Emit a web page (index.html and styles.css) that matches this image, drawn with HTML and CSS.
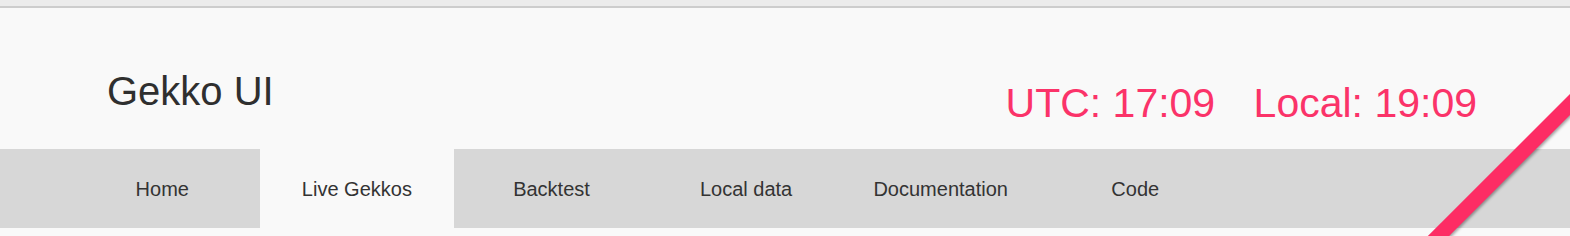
FILE: index.html
```html
<!DOCTYPE html>
<html lang="en">
<head>
    <meta charset="UTF-8">
    <title>Gekko UI</title>
    <link rel="stylesheet" href="styles.css">
</head>
<body>
    <div class="chrome"></div>
    <header class="header">
        <h1 class="title">Gekko UI</h1>
        <div class="clock">
            <span>UTC: 17:09</span>
            <span class="local">Local: 19:09</span>
        </div>
    </header>
    <nav class="nav">
        <a class="nav-item">Home</a>
        <a class="nav-item active">Live Gekkos</a>
        <a class="nav-item">Backtest</a>
        <a class="nav-item">Local data</a>
        <a class="nav-item">Documentation</a>
        <a class="nav-item">Code</a>
    </nav>
    <div class="ribbon-wrap">
        <div class="ribbon"></div>
    </div>
</body>
</html>
```

FILE: styles.css
```css
html, body {
    margin: 0;
    padding: 0;
    height: 100%;
}

body {
    font-family: "Liberation Sans", Arial, sans-serif;
    background-color: #f9f9f9;
    color: #333;
    overflow: hidden;
    position: relative;
}

.chrome {
    height: 6px;
    background-color: #ececec;
    border-bottom: 2px solid #cdcdcd;
}

.header {
    display: flex;
    justify-content: space-between;
    align-items: flex-start;
    height: 141px;
    box-sizing: border-box;
    padding: 59px 93px 0 107px;
}

.title {
    margin: 0;
    font-size: 40px;
    font-weight: normal;
    line-height: 48px;
    color: #2f2f2f;
}

.clock {
    margin-top: 12px;
    font-size: 41px;
    line-height: 48px;
    color: #fb3369;
}

.clock .local {
    margin-left: 27px;
}

.nav {
    display: flex;
    height: 79px;
    padding-left: 65px;
    background-color: #d7d7d7;
}

.nav-item {
    width: 194.6px;
    text-align: center;
    font-size: 20px;
    line-height: 81px;
    color: #333;
    cursor: pointer;
}

.nav-item.active {
    background-color: #f9f9f9;
}

/* corner ribbon, clipped to the bottom-right corner */
.ribbon-wrap {
    position: absolute;
    right: 0;
    bottom: 0;
    width: 160px;
    height: 150px;
    overflow: hidden;
}

.ribbon {
    position: absolute;
    left: -109px;
    top: 80px;
    width: 400px;
    height: 15px;
    background-color: #fd2c64;
    box-shadow: 1px 2px 3px rgba(0, 0, 0, 0.35);
    transform: rotate(-45deg);
}
```
